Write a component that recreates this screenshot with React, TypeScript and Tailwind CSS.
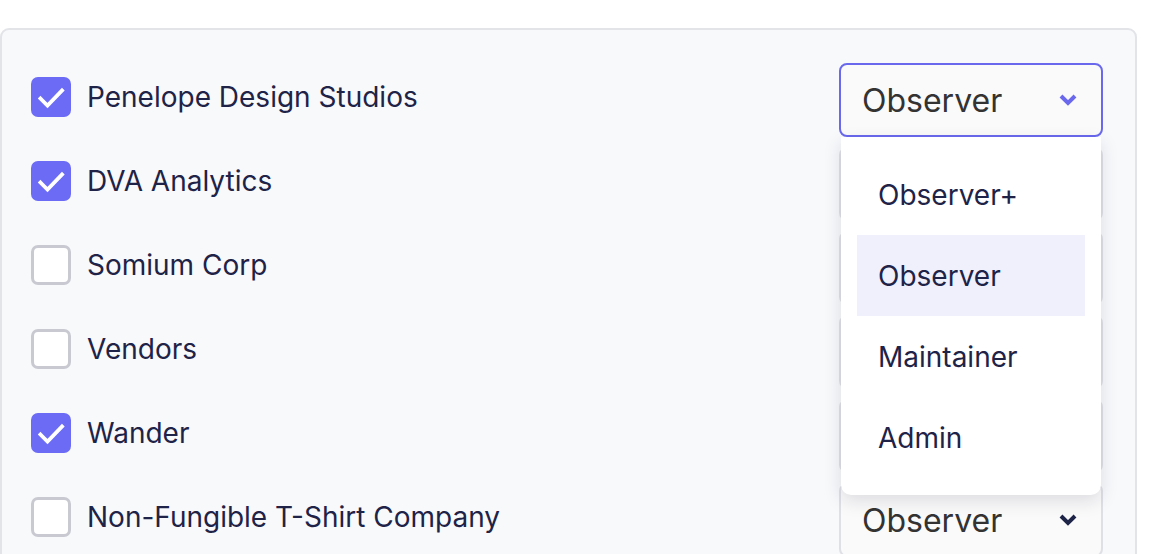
import React from 'react';

const font = { fontFamily: 'Inter, "Noto Sans", sans-serif' };

const rows = [
  { name: 'Penelope Design Studios', checked: true },
  { name: 'DVA Analytics', checked: true },
  { name: 'Somium Corp', checked: false },
  { name: 'Vendors', checked: false },
  { name: 'Wander', checked: true },
  { name: 'Non-Fungible T-Shirt Company', checked: false },
];

const roles = ['Observer+', 'Observer', 'Maintainer', 'Admin'];

function Checkbox({ checked }: { checked: boolean }) {
  if (checked) {
    return (
      <span className="flex h-[40px] w-[40px] shrink-0 items-center justify-center rounded-[7px] bg-[#6b6bf6]">
        <svg width="40" height="40" viewBox="0 0 40 40" fill="none">
          <path d="M9.5 21.5 L16.5 28.5 L31 13.5" stroke="white" strokeWidth="3.8" strokeLinecap="square" />
        </svg>
      </span>
    );
  }
  return <span className="h-[40px] w-[40px] shrink-0 rounded-[7px] border-[3px] border-[#c8c9d1] bg-white" />;
}

function Chevron({ color }: { color: string }) {
  return (
    <svg width="22" height="16" viewBox="0 0 22 16" fill="none">
      <path d="M4 4 L11 11 L18 4" stroke={color} strokeWidth="4" />
    </svg>
  );
}

function RoleSelect({ open }: { open: boolean }) {
  return (
    <div className="relative">
      <div
        className={
          open
            ? 'flex h-[74px] w-[264px] items-center justify-between rounded-[8px] border-2 border-[#6a69ee] bg-[#fafafa] pl-[21px] pr-[22px]'
            : 'flex h-[74px] w-[264px] items-center justify-between rounded-[8px] border-2 border-[#dfe0e6] bg-[#fafafa] pl-[21px] pr-[22px]'
        }
      >
        <span className="pt-[2px] text-[32px] leading-none text-[#333333]">Observer</span>
        <Chevron color={open ? '#6a69ee' : '#1e2448'} />
      </div>
      {open && (
        <div className="absolute left-[2px] right-[2px] top-full z-10 rounded-b-[10px] bg-white px-[16px] py-[17px] shadow-[0_6px_18px_rgba(20,24,60,0.13)]">
          {roles.map((role) => (
            <div
              key={role}
              className={
                role === 'Observer'
                  ? 'flex h-[81px] items-center bg-[#f0f0fd] pl-[21px] text-[28px] text-[#1e2347]'
                  : 'flex h-[81px] items-center pl-[21px] text-[28px] text-[#1e2347]'
              }
            >
              {role}
            </div>
          ))}
        </div>
      )}
    </div>
  );
}

export default function App() {
  return (
    <div className="h-[554px] w-[1174px] overflow-hidden bg-white pt-[28px]" style={font}>
      <div className="h-[600px] w-[1137px] rounded-[9px] border-2 border-[#e3e4e8] bg-[#f8f9fb] pl-[29px] pr-[32px] pt-[33px]">
        <div className="flex flex-col gap-[10px]">
          {rows.map((row, i) => (
            <div key={row.name} className="flex h-[74px] items-center justify-between">
              <div className="mb-[6px] flex items-center gap-[16px]">
                <Checkbox checked={row.checked} />
                <span className="text-[28px] leading-none text-[#1e2347]">{row.name}</span>
              </div>
              <RoleSelect open={i === 0} />
            </div>
          ))}
        </div>
      </div>
    </div>
  );
}
